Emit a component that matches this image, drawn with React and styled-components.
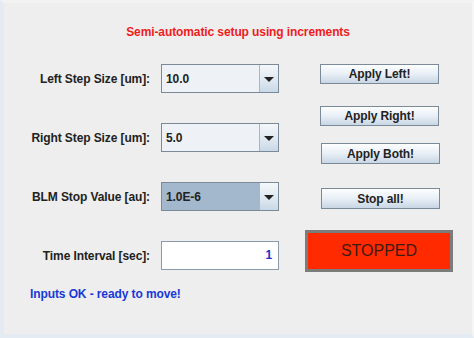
import React from 'react';
import styled, { createGlobalStyle } from 'styled-components';

const GlobalStyle = createGlobalStyle`
  html, body {
    margin: 0;
    padding: 0;
    background: #eeeeee;
  }
  * {
    box-sizing: border-box;
  }
`;

const Window = styled.div`
  width: 474px;
  height: 338px;
  background: #eeeeee;
  border-left: 4px solid #e4ebf3;
  border-bottom: 4px solid #e4ebf3;
  border-right: 2px solid #f6f6f6;
  border-top: 3px solid #f2f2f2;
  font-family: "Liberation Sans", Arial, sans-serif;
  font-size: 12px;
  font-weight: bold;
  letter-spacing: -0.1px;
  color: #222222;
  overflow: hidden;
`;

const Title = styled.div`
  height: 21px;
  margin-top: 19px;
  text-align: center;
  color: #ee1c1c;
  line-height: 21px;
`;

const Body = styled.div`
  display: flex;
  margin-top: 21px;
`;

const FieldColumn = styled.div`
  display: flex;
  flex-direction: column;
  gap: 30px;
  width: 279px;
`;

const FieldRow = styled.div`
  display: grid;
  grid-template-columns: 146px 118px;
  column-gap: 11px;
  align-items: center;
  height: 29px;
`;

const Label = styled.label`
  text-align: right;
  white-space: nowrap;
`;

const Combo = styled.div`
  display: flex;
  height: 29px;
  border: 1px solid #7a8a99;
  background: #eef1f5;
`;

const ComboValue = styled.div`
  flex: 1;
  display: flex;
  align-items: center;
  padding-left: 4px;
  background: ${(p) => (p.$selected ? '#a3b8cc' : '#eef1f5')};
  color: #222222;
`;

const ComboArrow = styled.div`
  width: 19px;
  display: flex;
  align-items: center;
  justify-content: center;
  border-left: 1px solid #a8b6c4;
  background: linear-gradient(#f4f7fa, #dde7f0 60%, #c9d8e6);
`;

const Caret = styled.span`
  width: 0;
  height: 0;
  border-left: 5px solid transparent;
  border-right: 5px solid transparent;
  border-top: 5px solid #222222;
  margin-top: 2px;
`;

const TextField = styled.div`
  height: 29px;
  border: 1px solid #8a9aaa;
  background: #ffffff;
  color: #1c2fcc;
  text-align: right;
  padding-right: 6px;
  line-height: 27px;
`;

const ButtonColumn = styled.div`
  display: flex;
  flex-direction: column;
  align-items: flex-start;
  margin-left: 22px;
`;

const Button = styled.button`
  width: 119px;
  height: ${(p) => p.$h || 20}px;
  margin-top: ${(p) => p.$top || 0}px;
  margin-left: ${(p) => p.$left || 15}px;
  border: 1px solid #7a8a99;
  background: linear-gradient(#fdfeff, #e8eff6 50%, #c8d6e4);
  font-family: inherit;
  font-size: 12px;
  font-weight: bold;
  letter-spacing: -0.1px;
  color: #222222;
  padding: 0;
`;

const StatusBox = styled.div`
  width: 148px;
  height: 42px;
  margin-top: 21px;
  border: 3px solid #7c7c7c;
  background: #ff2a00;
  color: #3e1a16;
  display: flex;
  align-items: center;
  justify-content: center;
  font-size: 16px;
  font-weight: normal;
  letter-spacing: 0;
`;

const Message = styled.div`
  margin: 15px 0 0 26px;
  color: #1838d8;
`;

const App = () => {
  return (
    <>
      <GlobalStyle />
      <Window>
        <Title>Semi-automatic setup using increments</Title>
        <Body>
          <FieldColumn>
            <FieldRow>
              <Label>Left Step Size [um]:</Label>
              <Combo>
                <ComboValue>10.0</ComboValue>
                <ComboArrow><Caret /></ComboArrow>
              </Combo>
            </FieldRow>
            <FieldRow>
              <Label>Right Step Size [um]:</Label>
              <Combo>
                <ComboValue>5.0</ComboValue>
                <ComboArrow><Caret /></ComboArrow>
              </Combo>
            </FieldRow>
            <FieldRow>
              <Label>BLM Stop Value [au]:</Label>
              <Combo>
                <ComboValue $selected>1.0E-6</ComboValue>
                <ComboArrow><Caret /></ComboArrow>
              </Combo>
            </FieldRow>
            <FieldRow>
              <Label>Time Interval [sec]:</Label>
              <TextField>1</TextField>
            </FieldRow>
          </FieldColumn>
          <ButtonColumn>
            <Button>Apply Left!</Button>
            <Button $top={22}>Apply Right!</Button>
            <Button $top={17} $h={21} $left={16}>Apply Both!</Button>
            <Button $top={24} $h={21} $left={16}>Stop all!</Button>
            <StatusBox>STOPPED</StatusBox>
          </ButtonColumn>
        </Body>
        <Message>Inputs OK - ready to move!</Message>
      </Window>
    </>
  );
};

export default App;
